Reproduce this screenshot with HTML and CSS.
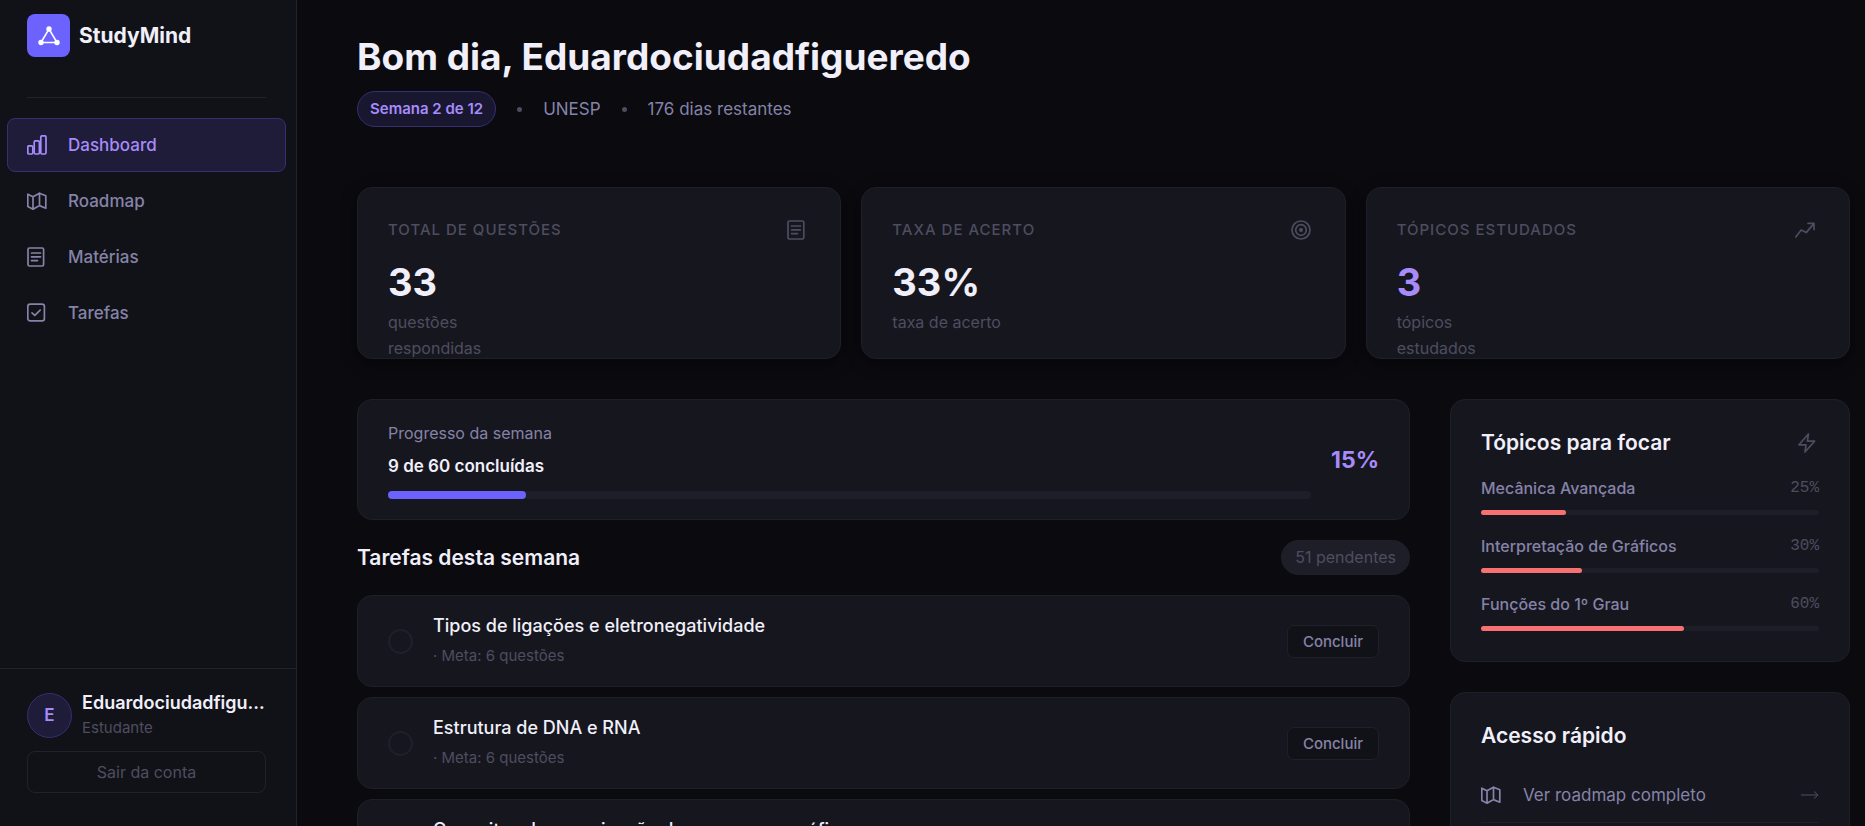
FILE: index.html
```
<!DOCTYPE html>
<html lang="pt-BR">
  <head>
    <meta charset="UTF-8" />
    <meta name="viewport" content="width=device-width, initial-scale=1.0" />
    <title>StudyMind - Dashboard</title>
    <link rel="stylesheet" href="styles.css" />
  </head>
  <body>
    <aside class="sidebar">
      <div class="brand">
        <span class="brand-logo">
          <svg viewBox="0 0 22 20" width="22" height="20" fill="none" stroke="#fff" stroke-width="1.5">
            <path d="M11 3 3 16.5M11 3l8 13.5M3 16.5h16" />
            <g fill="#fff" stroke="none">
              <circle cx="11" cy="3" r="2.7" />
              <circle cx="3" cy="16.5" r="2.7" />
              <circle cx="19" cy="16.5" r="2.7" />
            </g>
          </svg>
        </span>
        <span class="brand-name">StudyMind</span>
      </div>

      <nav class="nav">
        <a href="#" class="nav-link active">
          <svg class="icon" viewBox="0 0 20 20">
            <rect x="0.8" y="10.8" width="5" height="8.2" rx="1.2" />
            <rect x="7.2" y="5.8" width="5.2" height="13.2" rx="1.2" />
            <rect x="13.8" y="0.8" width="5.2" height="18.2" rx="1.2" />
          </svg>
          Dashboard
        </a>
        <a href="#" class="nav-link">
          <svg class="icon" viewBox="0 0 20 20">
            <path d="M0.8 3.2 6 5.8l6.5-3.6 6.3 2.6v12.4l-6.3-2.6L6 18.2.8 15.6zM6 5.8v12.4M12.5 2.2v12.4" />
          </svg>
          Roadmap
        </a>
        <a href="#" class="nav-link">
          <svg class="icon" viewBox="0 0 20 20">
            <rect x="1" y="1" width="15.6" height="18" rx="1.5" />
            <path d="M4.5 6h9M4.5 9.8h9M4.5 13.6h6" />
          </svg>
          Matérias
        </a>
        <a href="#" class="nav-link">
          <svg class="icon" viewBox="0 0 20 20">
            <rect x="0.8" y="1.2" width="16.6" height="16.6" rx="2.4" />
            <path d="m5 9.8 2.8 2.6 5.4-5.2" />
          </svg>
          Tarefas
        </a>
      </nav>

      <div class="sidebar-footer">
        <div class="user">
          <span class="avatar">E</span>
          <div class="user-info">
            <p class="user-name">Eduardociudadfigueredo</p>
            <p class="user-role">Estudante</p>
          </div>
        </div>
        <button type="button" class="btn-logout">Sair da conta</button>
      </div>
    </aside>

    <main class="main">
      <header class="page-header">
        <h1>Bom dia, Eduardociudadfigueredo</h1>
        <div class="page-meta">
          <span class="badge">Semana 2 de 12</span>
          <span class="dot"></span>
          <span>UNESP</span>
          <span class="dot"></span>
          <span>176 dias restantes</span>
        </div>
      </header>

      <section class="stats">
        <article class="card stat">
          <div class="stat-top">
            <span class="stat-label">Total de questões</span>
            <span class="stat-icon">
              <svg class="icon" viewBox="0 0 20 20">
                <rect x="2" y="1" width="15.8" height="18" rx="1.5" />
                <path d="M5.5 6h9M5.5 9.8h9M5.5 13.6h6" />
              </svg>
            </span>
          </div>
          <p class="stat-value">33</p>
          <p class="stat-sub">questões respondidas</p>
        </article>
        <article class="card stat">
          <div class="stat-top">
            <span class="stat-label">Taxa de acerto</span>
            <span class="stat-icon">
              <svg class="icon" viewBox="0 0 20 20">
                <circle cx="10" cy="10" r="9" />
                <circle cx="10" cy="10" r="5.3" />
                <circle cx="10" cy="10" r="2" fill="currentColor" stroke="none" />
              </svg>
            </span>
          </div>
          <p class="stat-value">33%</p>
          <p class="stat-sub">taxa de acerto</p>
        </article>
        <article class="card stat">
          <div class="stat-top">
            <span class="stat-label">Tópicos estudados</span>
            <span class="stat-icon">
              <svg class="icon" viewBox="0 0 20 20">
                <path d="m.8 17 5.4-7 5 2.6L18.8 3.6M13 3.4h6v6" />
              </svg>
            </span>
          </div>
          <p class="stat-value accent">3</p>
          <p class="stat-sub">tópicos estudados</p>
        </article>
      </section>

      <div class="content">
        <section class="col">
          <div class="card progress">
            <div class="progress-body">
              <p class="progress-label">Progresso da semana</p>
              <p class="progress-count">9 de 60 concluídas</p>
              <div class="bar bar-lg"><div class="bar-fill" style="width: 15%"></div></div>
            </div>
            <span class="progress-pct">15%</span>
          </div>

          <div class="section-head">
            <h2>Tarefas desta semana</h2>
            <span class="pill">51 pendentes</span>
          </div>

          <ul class="tasks">
            <li class="card task">
              <input type="checkbox" class="task-check" id="task1" />
              <div class="task-info">
                <label class="task-title" for="task1">Tipos de ligações e eletronegatividade</label>
                <p class="task-meta">· Meta: 6 questões</p>
              </div>
              <button type="button" class="btn-done">Concluir</button>
            </li>
            <li class="card task">
              <input type="checkbox" class="task-check" id="task2" />
              <div class="task-info">
                <label class="task-title" for="task2">Estrutura de DNA e RNA</label>
                <p class="task-meta">· Meta: 6 questões</p>
              </div>
              <button type="button" class="btn-done">Concluir</button>
            </li>
            <li class="card task">
              <input type="checkbox" class="task-check" id="task3" />
              <div class="task-info">
                <label class="task-title" for="task3">Conceitos de organização do espaço geográfico</label>
                <p class="task-meta">· Meta: 6 questões</p>
              </div>
              <button type="button" class="btn-done">Concluir</button>
            </li>
          </ul>
        </section>

        <aside class="side">
          <section class="card panel">
            <div class="panel-head">
              <h2>Tópicos para focar</h2>
              <span class="panel-icon">
                <svg class="icon" viewBox="0 0 20 20">
                  <path d="M11.4 1 2 11.8h7L8 19l9.6-10.8h-7.2z" />
                </svg>
              </span>
            </div>
            <div class="topics">
              <div class="topic">
                <div class="topic-row"><span>Mecânica Avançada</span><span class="topic-pct">25%</span></div>
                <div class="bar"><div class="bar-fill low" style="width: 25%"></div></div>
              </div>
              <div class="topic">
                <div class="topic-row"><span>Interpretação de Gráficos</span><span class="topic-pct">30%</span></div>
                <div class="bar"><div class="bar-fill low" style="width: 30%"></div></div>
              </div>
              <div class="topic">
                <div class="topic-row"><span>Funções do 1º Grau</span><span class="topic-pct">60%</span></div>
                <div class="bar"><div class="bar-fill low" style="width: 60%"></div></div>
              </div>
            </div>
          </section>

          <section class="card panel">
            <div class="panel-head">
              <h2>Acesso rápido</h2>
            </div>
            <a href="#" class="quick-link">
              <svg class="icon" viewBox="0 0 20 20">
                <path d="M0.8 3.2 6 5.8l6.5-3.6 6.3 2.6v12.4l-6.3-2.6L6 18.2.8 15.6zM6 5.8v12.4M12.5 2.2v12.4" />
              </svg>
              <span>Ver roadmap completo</span>
              <svg class="quick-arrow" viewBox="0 0 18 10">
                <path d="M0 5h17M13 1.5 17 5l-4 3.5" />
              </svg>
            </a>
          </section>
        </aside>
      </div>
    </main>
  </body>
</html>
```

FILE: styles.css
```
:root {
  --bg: #0a0a0f;
  --bg-sidebar: #111217;
  --bg-card: #16161e;
  --bg-muted: #1e1e28;
  --border: #1f1f2a;
  --primary: #6c63ff;
  --accent: #a78bfa;
  --accent-bg: #1e1c38;
  --accent-border: #352f73;
  --danger: #f87171;
  --text: #f0effa;
  --text-soft: #8583a8;
  --text-dim: #4e4d60;
  --font: Inter, "Liberation Sans", sans-serif;
  --mono: "Liberation Mono", monospace;
}

* {
  margin: 0;
  padding: 0;
  box-sizing: border-box;
}

body {
  display: flex;
  height: 100vh;
  overflow: hidden;
  background: var(--bg);
  color: var(--text);
  font-family: var(--font);
  font-size: 16px;
  line-height: 26px;
}

a {
  color: inherit;
  text-decoration: none;
}

button {
  font-family: inherit;
  cursor: pointer;
}

h2 {
  font-size: 21px;
  font-weight: 600;
  line-height: 26px;
}

.icon {
  flex-shrink: 0;
  width: 20px;
  height: 20px;
  fill: none;
  stroke: currentColor;
  stroke-width: 1.7;
  stroke-linecap: round;
  stroke-linejoin: round;
}

.card {
  background: var(--bg-card);
  border: 1px solid var(--border);
  border-radius: 15px;
}

/* sidebar */
.sidebar {
  display: flex;
  flex-direction: column;
  flex-shrink: 0;
  width: 297px;
  background: var(--bg-sidebar);
  border-right: 1px solid #22222e;
}

.brand {
  display: flex;
  align-items: center;
  gap: 9px;
  margin: 0 30px 0 27px;
  padding: 14px 0 40px;
  border-bottom: 1px solid #22222b;
}

.brand-logo {
  display: flex;
  align-items: center;
  justify-content: center;
  width: 43px;
  height: 43px;
  border-radius: 8px;
  background: var(--primary);
}

.brand-name {
  font-size: 21px;
  font-weight: 700;
}

.nav {
  display: flex;
  flex-direction: column;
  gap: 2px;
  padding: 20px 10px 20px 7px;
}

.nav-link {
  display: flex;
  align-items: center;
  gap: 21px;
  height: 54px;
  padding: 0 19px;
  border: 1px solid transparent;
  border-radius: 8px;
  color: var(--text-soft);
  font-size: 17px;
  font-weight: 500;
}

.nav-link.active {
  background: var(--accent-bg);
  border-color: var(--accent-border);
  color: var(--accent);
}

.sidebar-footer {
  margin-top: auto;
  padding: 21px 30px 33px 27px;
  border-top: 1px solid #22222b;
}

.user {
  display: flex;
  align-items: center;
  gap: 10px;
  margin-bottom: 11px;
}

.avatar {
  display: flex;
  align-items: center;
  justify-content: center;
  flex-shrink: 0;
  width: 45px;
  height: 45px;
  border: 1px solid var(--accent-border);
  border-radius: 50%;
  background: var(--accent-bg);
  color: var(--accent);
  font-size: 17px;
  font-weight: 600;
}

.user-info {
  min-width: 0;
}

.user-name {
  overflow: hidden;
  text-overflow: ellipsis;
  white-space: nowrap;
  font-size: 18px;
  font-weight: 600;
  line-height: 25px;
}

.user-role {
  color: var(--text-dim);
  font-size: 15px;
  line-height: 25px;
}

.btn-logout {
  width: 100%;
  height: 42px;
  border: 1px solid #22222b;
  border-radius: 8px;
  background: transparent;
  color: var(--text-dim);
  font-size: 16px;
}

/* main */
.main {
  flex: 1;
  min-width: 0;
  overflow-y: auto;
  scrollbar-width: none;
  padding: 33px 15px 0 60px;
}

.page-header {
  margin-bottom: 60px;
}

h1 {
  margin-bottom: 10px;
  font-size: 37px;
  font-weight: 700;
  line-height: 48px;
}

.page-meta {
  display: flex;
  align-items: center;
  gap: 21px;
  color: var(--text-soft);
  font-size: 17px;
}

.badge {
  padding: 4px 12px;
  border: 1px solid var(--accent-border);
  border-radius: 18px;
  background: #191730;
  color: var(--accent);
  font-size: 15px;
  font-weight: 600;
}

.dot {
  width: 5px;
  height: 5px;
  border-radius: 50%;
  background: var(--text-dim);
}

.stats {
  display: grid;
  grid-template-columns: repeat(3, 1fr);
  gap: 20px;
  margin-bottom: 40px;
}

.stat {
  height: 172px;
  padding: 28px 30px;
  overflow: hidden;
  box-shadow: 0 4px 16px rgba(0, 0, 0, 0.4);
}

.stat-top {
  display: flex;
  align-items: center;
  justify-content: space-between;
  height: 28px;
  color: var(--text-dim);
}

.stat-label {
  font-size: 15px;
  font-weight: 500;
  letter-spacing: 1px;
  text-transform: uppercase;
}

.stat-icon {
  display: flex;
  justify-content: center;
  width: 28px;
}

.stat-value {
  margin: 14px 0 3px;
  font-size: 38px;
  font-weight: 700;
  line-height: 48px;
}

.accent {
  color: var(--accent);
}

.stat-sub {
  max-width: 120px;
  color: var(--text-dim);
}

.content {
  display: grid;
  grid-template-columns: 1fr 400px;
  gap: 40px;
}

.progress {
  display: flex;
  align-items: center;
  gap: 20px;
  padding: 20px 30px;
}

.progress-body {
  flex: 1;
}

.progress-label {
  color: var(--text-soft);
}

.progress-count {
  margin: 7px 0 12px;
  font-size: 17px;
  font-weight: 600;
}

.progress-pct {
  color: var(--accent);
  font-size: 23px;
  font-weight: 700;
}

.bar {
  height: 5px;
  border-radius: 4px;
  background: var(--bg-muted);
}

.bar-lg {
  height: 8px;
}

.bar-fill {
  height: 100%;
  border-radius: 4px;
  background: var(--primary);
}

.bar-fill.low {
  background: var(--danger);
}

.section-head {
  display: flex;
  align-items: center;
  justify-content: space-between;
  margin: 20px 0;
}

.pill {
  padding: 4px 13px;
  border: 1px solid #20202c;
  border-radius: 18px;
  background: var(--bg-muted);
  color: var(--text-dim);
  line-height: 25px;
}

.tasks {
  display: flex;
  flex-direction: column;
  gap: 10px;
  list-style: none;
}

.task {
  display: flex;
  align-items: center;
  gap: 20px;
  height: 92px;
  padding: 0 30px;
}

.task-check {
  appearance: none;
  width: 25px;
  height: 25px;
  border: 2px solid #20202b;
  border-radius: 50%;
}

.task-check:checked {
  background: var(--primary);
}

.task-info {
  flex: 1;
}

.task-title {
  display: block;
  margin-bottom: 4px;
  font-size: 18px;
  font-weight: 500;
}

.task-meta {
  color: var(--text-dim);
  font-size: 15px;
}

.btn-done {
  height: 33px;
  padding: 0 15px;
  border: 1px solid #20202b;
  border-radius: 7px;
  background: var(--bg-sidebar);
  color: var(--text-soft);
  font-size: 15px;
  font-weight: 500;
}

.side {
  display: flex;
  flex-direction: column;
  gap: 30px;
}

.panel {
  padding: 30px;
}

.panel-head {
  display: flex;
  align-items: center;
  justify-content: space-between;
  margin-bottom: 19px;
}

.panel-icon {
  display: flex;
  justify-content: center;
  width: 24px;
  color: var(--text-dim);
}

.topics {
  display: flex;
  flex-direction: column;
  gap: 18px;
}

.topic-row {
  display: flex;
  justify-content: space-between;
  margin-bottom: 9px;
  color: var(--text-soft);
  font-weight: 500;
}

.topic-pct {
  color: var(--text-dim);
  font-family: var(--mono);
  font-weight: 400;
}

.quick-link {
  display: flex;
  align-items: center;
  gap: 22px;
  padding: 14px 0;
  border-bottom: 1px solid var(--border);
  color: var(--text-soft);
  font-size: 17px;
}

.quick-arrow {
  width: 18px;
  height: 10px;
  margin-left: auto;
  fill: none;
  stroke: var(--text-dim);
}
```
